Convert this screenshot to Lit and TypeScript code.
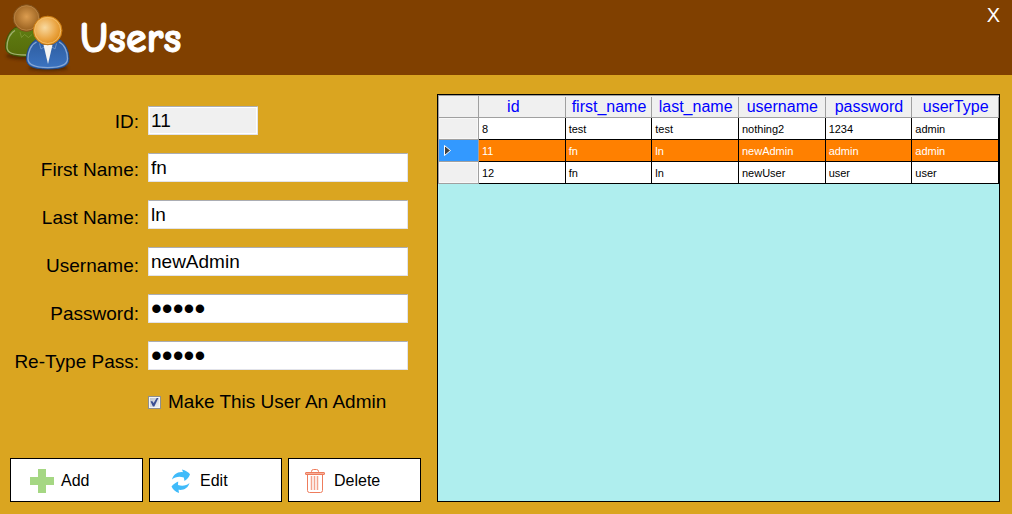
import { LitElement, html, css, svg } from "lit";
import { customElement, state } from "lit/decorators.js";
import { classMap } from "lit/directives/class-map.js";

interface User {
  id: number;
  first_name: string;
  last_name: string;
  username: string;
  password: string;
  userType: string;
}

const COLUMNS: (keyof User)[] = ["id", "first_name", "last_name", "username", "password", "userType"];

const USERS: User[] = [
  { id: 8, first_name: "test", last_name: "test", username: "nothing2", password: "1234", userType: "admin" },
  { id: 11, first_name: "fn", last_name: "ln", username: "newAdmin", password: "admin", userType: "admin" },
  { id: 12, first_name: "fn", last_name: "ln", username: "newUser", password: "user", userType: "user" },
];

const usersIcon = html`<svg class="logo" viewBox="0 0 72 72" aria-hidden="true">
  <defs>
    <radialGradient id="back" cx="0.5" cy="0.45" r="0.55"><stop offset="0" stop-color="#dc9d50" /><stop offset="1" stop-color="#955d1c" /></radialGradient>
    <radialGradient id="front" cx="0.4" cy="0.4" r="0.65"><stop offset="0" stop-color="#f8d9a0" /><stop offset="0.6" stop-color="#eba747" /><stop offset="1" stop-color="#dd8a16" /></radialGradient>
    <linearGradient id="green" x1="0" y1="0" x2="0" y2="1"><stop offset="0" stop-color="#5f7d12" /><stop offset="1" stop-color="#566b0a" /></linearGradient>
    <linearGradient id="blue" x1="0" y1="0" x2="0" y2="1"><stop offset="0" stop-color="#2d5b9d" /><stop offset="1" stop-color="#3c74c2" /></linearGradient>
    <filter id="soft" x="-30%" y="-100%" width="160%" height="300%"><feGaussianBlur stdDeviation="1.6" /></filter>
  </defs>
  <ellipse cx="26" cy="54" rx="20" ry="4" fill="#401c00" opacity="0.6" filter="url(#soft)" />
  <ellipse cx="48" cy="66" rx="20" ry="3" fill="#401c00" opacity="0.7" filter="url(#soft)" />
  <path d="M17 25C10 27 5.500 36 5.500 45c0 7 7 9.500 20.500 9.500S46 52 46 45c0-9-4-16-10-20z" fill="url(#green)" stroke="#3f5206" />
  <path d="M15 28.500C10 31 7 38 7 45c0 6 6 8 19 8" fill="none" stroke="#a0b070" stroke-width="1.300" />
  <path d="M20 30l1.500 5.500 3-3 4 3 3.500-3" fill="none" stroke="#7f9636" stroke-width="1" opacity="0.8" />
  <circle cx="26.500" cy="16" r="13.300" fill="url(#back)" stroke="#80501a" />
  <circle cx="26.500" cy="16" r="12.200" fill="none" stroke="#b98140" stroke-width="1" />
  <path d="M38 37C31 39 26.500 48 26.500 57c0 7.500 7 10 21.300 10S69 64.500 69 57c0-9-4-17-11-20z" fill="url(#blue)" stroke="#204a87" />
  <path d="M36.500 40C31 42.500 28 49.500 28 56.800c0 6.200 6.500 8.800 19.800 8.800s19.700-2.600 19.700-8.800c0-7.300-3-14.300-8.500-16.800" fill="none" stroke="#86a7d6" stroke-width="1.300" />
  <path d="M43.500 43h9l-4.500 19z" fill="#f4f4f2" />
  <path d="M39.500 41.500l1.500 5.500 3-2M56.500 41.500l-1.500 5.500-3-2" fill="none" stroke="#769bcc" stroke-width="1" opacity="0.8" />
  <circle cx="47.700" cy="28.500" r="14.300" fill="url(#front)" stroke="#c97a10" />
  <circle cx="47.700" cy="28.500" r="13" fill="none" stroke="#f3bd68" stroke-width="1" />
</svg>`;

const addIcon = html`<svg class="icon" viewBox="0 0 24 24" aria-hidden="true">
  <path d="M8 0h8v8h8v8h-8v8H8v-8H0V8h8z" fill="#a5d783" />
</svg>`;

const editIcon = html`<svg class="icon" viewBox="0 0 24 24" aria-hidden="true">
  <path d="M3 10.500C4.500 5.500 8.500 2.500 14 3.200L13 .5C16.500 1.500 19.500 3 21 5.200C20 8 18.500 10 15.500 12L14.800 8.500C10 7 6 8 3 10.500z" fill="#40bbfa" />
  <path d="M20.500 14C19 19 15 21.500 9.500 20.800L10 24C6.500 23 4 20.500 2.500 17.500C4 15.500 6.500 13.500 9.200 12.500L9 16C13.500 17.500 17.500 16.500 20.500 14z" fill="#40bbfa" />
</svg>`;

const deleteIcon = html`<svg class="icon" viewBox="0 0 24 24" aria-hidden="true" fill="none" stroke="#ee7c5c">
  <path d="M8.500 3.500v-1q0-2 2-2h3q2 0 2 2v1" />
  <rect x="2.500" y="3.500" width="19" height="2" rx="0.500" fill="#f6b09b" />
  <path d="M4.500 6v15.500q0 2 2 2h11q2 0 2-2V6" />
  <path d="M8.500 7v14M11.500 7v14M14.500 7v14" stroke-width="1.500" opacity="0.7" />
</svg>`;

@customElement("app-root")
export class AppRoot extends LitElement {
  static styles = css`
    :host {
      display: flex;
      flex-direction: column;
      min-height: 100vh;
      background: #daa520;
      color: #000;
      font-family: "Liberation Sans", Arial, sans-serif;
      font-size: 19px;
    }
    * { box-sizing: border-box; }
    button, input { font: inherit; color: inherit; margin: 0; }
    .bar {
      display: flex;
      align-items: center;
      gap: 8px;
      height: 75px;
      background: #804000;
      color: #fff;
    }
    .logo { width: 72px; height: 72px; }
    h1 {
      flex: 1;
      margin: 0;
      padding-top: 2px;
      font: 700 42px/48px "Comic Sans MS", "Comic Neue", Lato, sans-serif;
      -webkit-text-stroke: 1px #fff;
    }
    .close {
      align-self: flex-start;
      padding: 4px 12px;
      border: 0;
      background: none;
      font-size: 20px;
      line-height: 23px;
      cursor: pointer;
    }
    main {
      flex: 1;
      display: grid;
      grid-template-columns: 411px 1fr;
      gap: 16px;
      padding: 19px 12px 12px 10px;
    }
    form {
      display: flex;
      flex-direction: column;
      justify-content: space-between;
    }
    .entry {
      display: grid;
      grid-template-columns: 129px 260px;
      column-gap: 9px;
      padding-top: 12px;
    }
    .labels, .fields { display: flex; flex-direction: column; }
    .labels { gap: 19px; padding-top: 1px; text-align: right; line-height: 29px; white-space: nowrap; }
    .fields { gap: 18px; }
    .text {
      width: 100%;
      height: 29px;
      padding: 0 2px;
      border: 1px solid #e2e3ea;
      border-top-color: #abadb3;
      border-radius: 1px;
      background: #fff;
      outline: none;
    }
    .text:disabled { width: 110px; background: #f0f0f0; box-shadow: inset 0 0 0 1px #fff; color: #000; }
    .secret { font-size: 31px; }
    .check { display: flex; align-items: center; gap: 7px; line-height: 28px; }
    .check input {
      appearance: none;
      display: grid;
      place-items: center;
      width: 13px;
      height: 13px;
      border: 1px solid #8e8f8f;
      background: linear-gradient(135deg, #b9bfc8, #f6f6f6);
      box-shadow: inset 0 0 0 1px #f4f4f4;
    }
    .check input:checked::before {
      content: "";
      width: 9px;
      height: 9px;
      background: #3c4f93;
      clip-path: polygon(6% 45%, 24% 38%, 40% 62%, 78% 0, 96% 0, 48% 100%, 32% 100%);
    }
    .actions { display: grid; grid-template-columns: repeat(3, 1fr); gap: 6px; }
    .action {
      display: flex;
      align-items: center;
      gap: 7px;
      height: 44px;
      padding: 2px 0 0 19px;
      border: 1px solid #000;
      background: #fff;
      font-size: 16px;
      cursor: pointer;
    }
    .action.delete { padding-left: 14px; }
    .icon { width: 24px; height: 24px; }
    .grid { border: 1px solid #000; background: #afeeee; }
    table { width: 100%; table-layout: fixed; border-collapse: separate; border-spacing: 0; }
    th, td { height: 22px; padding: 0; overflow: hidden; white-space: nowrap; }
    thead th {
      height: 23px;
      border-top: 1px solid #a0a0a0;
      border-bottom: 1px solid #a0a0a0;
      background: linear-gradient(#a0a0a0, #a0a0a0) right bottom / 1px 20px no-repeat #f0f0f0;
      color: #00f;
      font-weight: 400;
      font-size: 16px;
      line-height: 21px;
    }
    .idcol { padding-right: 18px; }
    .corner, .rowhead {
      width: 41px;
      border-right: 1px solid #a0a0a0;
      border-left: 1px solid #a0a0a0;
      background: #f0f0f0;
    }
    .rowhead { border-bottom: 1px solid #a0a0a0; box-shadow: inset 0 0 0 1px #f8f8f8; }
    .rowhead svg { display: block; width: 9px; height: 13px; margin-left: 4px; }
    td {
      padding-left: 3px;
      border-right: 1px solid #000;
      border-bottom: 1px solid #000;
      background: #fff;
      font-size: 11px;
      line-height: 20px;
    }
    .selected td { background: #ff8000; color: #fff; }
    .selected .rowhead { background: #3399ff; box-shadow: none; }
  `;

  @state() private selected = 11;

  private get current(): User {
    return USERS.find((u) => u.id === this.selected)!;
  }

  render() {
    const u = this.current;
    return html`
      <header class="bar">
        ${usersIcon}
        <h1>Users</h1>
        <button class="close" type="button" aria-label="Close">X</button>
      </header>
      <main>
        <form @submit=${(e: Event) => e.preventDefault()}>
          <div class="entry">
            <div class="labels">
              <label for="id">ID:</label>
              <label for="first">First Name:</label>
              <label for="last">Last Name:</label>
              <label for="username">Username:</label>
              <label for="pass">Password:</label>
              <label for="repass">Re-Type Pass:</label>
            </div>
            <div class="fields">
              <input class="text" id="id" type="text" disabled .value=${String(u.id)} />
              <input class="text" id="first" type="text" .value=${u.first_name} />
              <input class="text" id="last" type="text" .value=${u.last_name} />
              <input class="text" id="username" type="text" .value=${u.username} />
              <input class="text secret" id="pass" type="password" .value=${u.password} />
              <input class="text secret" id="repass" type="password" .value=${u.password} />
              <label class="check">
                <input type="checkbox" .checked=${u.userType === "admin"} />
                Make This User An Admin
              </label>
            </div>
          </div>
          <div class="actions">
            <button class="action" type="button">${addIcon}Add</button>
            <button class="action" type="button">${editIcon}Edit</button>
            <button class="action delete" type="button">${deleteIcon}Delete</button>
          </div>
        </form>
        <div class="grid">
          <table>
            <thead>
              <tr>
                <th class="corner"></th>
                ${COLUMNS.map((c) => html`<th scope="col" class=${classMap({ idcol: c === "id" })}>${c}</th>`)}
              </tr>
            </thead>
            <tbody>
              ${USERS.map((row) => html`
                <tr class=${classMap({ selected: row.id === this.selected })} @click=${() => (this.selected = row.id)}>
                  <th class="rowhead" scope="row">
                    ${row.id === this.selected
                      ? html`<svg viewBox="0 0 9 13" aria-hidden="true">${svg`<path d="M1.500 1.500l6 5-6 5z" fill="#404040" stroke="#fff" />`}</svg>`
                      : ""}
                  </th>
                  ${COLUMNS.map((c) => html`<td>${row[c]}</td>`)}
                </tr>`)}
            </tbody>
          </table>
        </div>
      </main>
    `;
  }
}
